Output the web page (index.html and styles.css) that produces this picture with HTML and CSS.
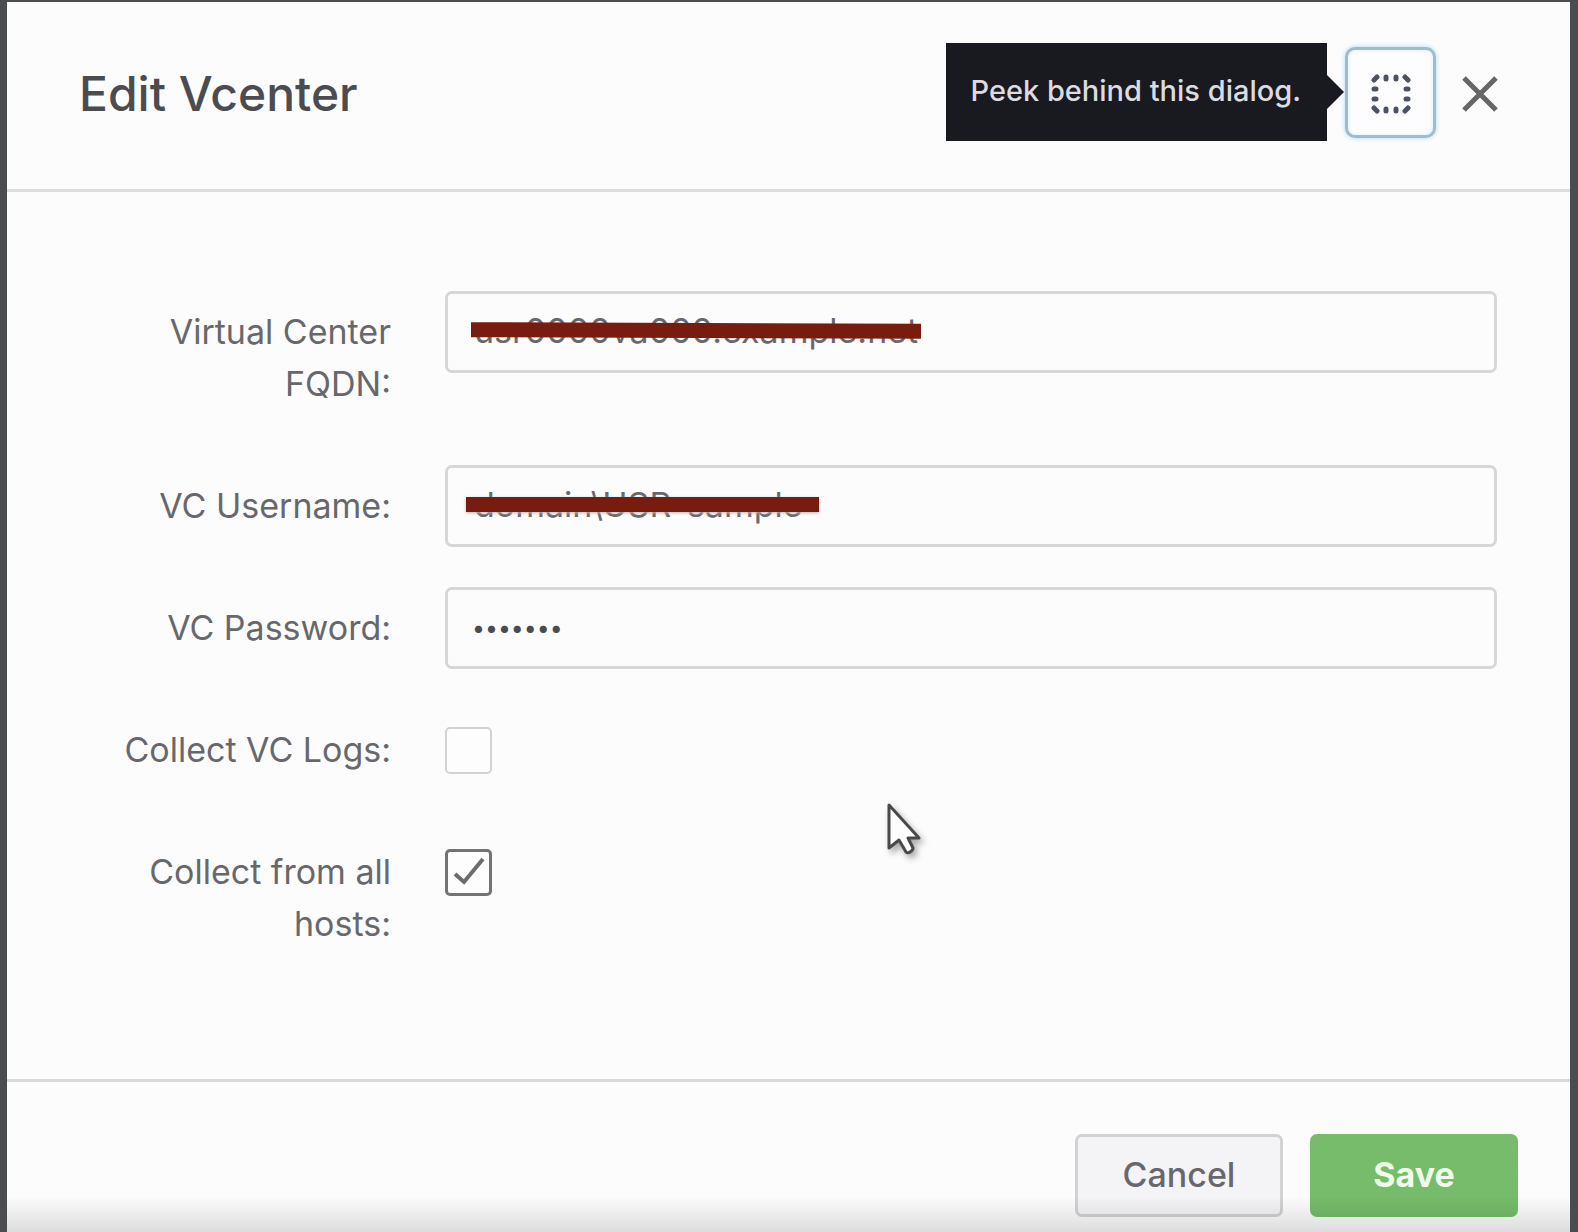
FILE: index.html
```html
<!DOCTYPE html>
<html lang="en">

<head>
    <meta charset="UTF-8">
    <meta name="viewport" content="width=device-width, initial-scale=1.0">
    <title>Edit Vcenter</title>
    <link rel="stylesheet" href="styles.css">
</head>

<body>
    <form class="dialog" role="dialog" aria-labelledby="dialog-title">
        <!-- Title, tooltip and window buttons -->
        <header class="dialog-header">
            <h1 id="dialog-title">Edit Vcenter</h1>
            <div class="dialog-tools">
                <div class="tooltip" role="tooltip" id="peek-tip">Peek behind this dialog.</div>
                <button class="peek" type="button" aria-label="Peek" aria-describedby="peek-tip">
                    <svg width="40" height="40" viewBox="0 0 40 40" fill="none" stroke="#4c5266" stroke-width="5" stroke-linecap="round">
                        <!-- dots along the sides -->
                        <path d="M15 3V5M25 3V5M15 35V37M25 35V37M3 15H5M3 25H5M35 15H37M35 25H37" />
                        <!-- corners -->
                        <path d="M3 6L6 3M34 3L37 6M3 34L6 37M34 37L37 34" />
                    </svg>
                </button>
                <button class="close" type="button" aria-label="Close">
                    <svg width="36" height="36" viewBox="0 0 36 36">
                        <path d="M2 2L34 34M34 2L2 34" fill="none" stroke="#656667" stroke-width="5" />
                    </svg>
                </button>
            </div>
        </header>

        <!-- Connection settings -->
        <div class="dialog-body">
            <div class="row">
                <label for="fqdn">Virtual Center FQDN:</label>
                <div class="field">
                    <!-- placeholder host name -->
                    <input class="text-input" type="text" id="fqdn" value="usr0000va000.example.net">
                    <span class="strike strike-fqdn"></span>
                </div>
            </div>
            <div class="row">
                <label for="username">VC Username:</label>
                <div class="field">
                    <!-- placeholder account -->
                    <input class="text-input" type="text" id="username" value="domain\USR-sample">
                    <span class="strike strike-username"></span>
                </div>
            </div>
            <div class="row">
                <label for="password">VC Password:</label>
                <div class="field">
                    <input class="text-input password" type="password" id="password" value="1234567">
                </div>
            </div>
            <div class="row">
                <label for="vc-logs">Collect VC Logs:</label>
                <div class="field check-field">
                    <input class="check" type="checkbox" id="vc-logs">
                </div>
            </div>
            <div class="row">
                <label for="all-hosts">Collect from all hosts:</label>
                <div class="field check-field">
                    <input class="check" type="checkbox" id="all-hosts" checked>
                    <svg class="tick" width="47" height="47" viewBox="0 0 47 47">
                        <path d="M10 25L19 33L38 10" fill="none" stroke="#6b6c6d" stroke-width="4" />
                    </svg>
                </div>
            </div>
        </div>

        <footer class="dialog-footer">
            <button class="btn" type="button">Cancel</button>
            <button class="btn btn-primary" type="submit">Save</button>
        </footer>
    </form>

    <div class="bottom-shade"></div>

    <!-- Mouse pointer -->
    <svg class="pointer" width="44" height="60" viewBox="0 0 44 60">
        <path d="M4 4V47L14 39L21 51C23 53 28 50 28 47L23 37H34Z" fill="#fdfdfd" stroke="#4a4a4c" stroke-width="3" stroke-linejoin="round" />
    </svg>
</body>

</html>
```
FILE: styles.css
```css
* {
    box-sizing: border-box;
}

body {
    margin: 0;
    padding: 2px 8px 0 7px;
    min-height: 100vh;
    display: flex;
    background-color: #4b4c50;
    font-family: Inter, Lato, sans-serif;
    color: #68686c;
}

button,
input {
    font-family: inherit;
    color: inherit;
}

.dialog {
    flex: 1;
    display: flex;
    flex-direction: column;
    background-color: #fcfcfd;
}

/* Header */
.dialog-header {
    display: flex;
    align-items: center;
    justify-content: space-between;
    padding: 41px 60px 48px 72px;
    border-bottom: 3px solid #dcdde0;
}

h1 {
    margin: 0;
    padding-top: 4px;
    font-size: 48px;
    line-height: 60px;
    font-weight: 500;
    color: #4c4c50;
}

.dialog-tools {
    display: flex;
    align-items: center;
}

.tooltip {
    position: relative;
    margin-right: 18px;
    padding: 23px 26px 25px 24px;
    background-color: #181a1f;
    color: #dcdce0;
    font-size: 29px;
    line-height: 50px;
    font-weight: 500;
}

.tooltip::after {
    content: "";
    position: absolute;
    top: 32px;
    left: 100%;
    border: 17px solid transparent;
    border-left-color: #181a1f;
    border-right: 0;
}

.peek,
.close {
    display: flex;
    align-items: center;
    justify-content: center;
    padding: 0;
    border: 0;
    background: none;
}

.peek {
    width: 91px;
    height: 91px;
    padding-top: 4px;
    border: 3px solid #a0bccb;
    border-radius: 10px;
    background-color: #fdfdff;
    box-shadow: 0 0 5px #a9d9ee, inset 0 0 5px #d6f1fb;
}

.close {
    width: 60px;
    height: 60px;
    padding-top: 4px;
    margin-left: 14px;
}

/* Form rows */
.dialog-body {
    flex: 1;
    display: flex;
    flex-direction: column;
    gap: 40px;
    padding: 99px 73px 40px 72px;
}

.row {
    display: grid;
    grid-template-columns: 312px 1fr;
    column-gap: 54px;
    align-items: start;
}

label {
    padding: 15px 0 15px 40px;
    font-size: 34px;
    line-height: 52px;
    text-align: right;
}

.field {
    position: relative;
    display: flex;
}

.text-input {
    width: 100%;
    height: 82px;
    padding: 0 26px 4px;
    border: 3px solid #d7d7da;
    border-radius: 7px;
    background-color: #fcfcfd;
    font-size: 34px;
}

.password {
    padding: 0 24px;
    font-size: 23px;
    color: #4c4c50;
}

/* Bars drawn over the private values */
.strike {
    position: absolute;
    height: 15px;
    background-color: #781c0f;
}

.strike-fqdn {
    top: 32px;
    left: 26px;
    width: 450px;
    transform: rotate(0.2deg);
}

.strike-username {
    top: 32px;
    left: 21px;
    width: 353px;
    box-shadow: 0 1px 3px #b9b9b9;
}

.check-field {
    height: 82px;
    align-items: center;
}

.check {
    appearance: none;
    width: 47px;
    height: 47px;
    margin: 0;
    border: 2px solid #d2d2d4;
    border-radius: 5px;
    background-color: #fdfdfd;
}

.check:checked {
    border: 3px solid #747476;
}

.tick {
    position: absolute;
    left: 0;
    pointer-events: none;
}

/* Footer */
.dialog-footer {
    display: flex;
    justify-content: flex-end;
    gap: 27px;
    padding: 52px 52px 15px;
    border-top: 3px solid #d9d9da;
}

.btn {
    width: 208px;
    height: 83px;
    padding: 0 0 2px;
    border: 3px solid #d2d2d4;
    border-radius: 7px;
    background-color: #f4f4f7;
    font-size: 34px;
    font-weight: 500;
}

.btn-primary {
    border-color: #76bc6a;
    background-color: #76bc6a;
    color: #f0fbe9;
    font-weight: 700;
}

.bottom-shade {
    position: fixed;
    left: 7px;
    right: 8px;
    bottom: 0;
    height: 36px;
    background: linear-gradient(rgba(0, 0, 0, 0), rgba(0, 0, 0, 0.12));
    pointer-events: none;
}

.pointer {
    position: absolute;
    left: 885px;
    top: 801px;
    filter: drop-shadow(3px 4px 3px #a8a8a8);
    pointer-events: none;
}
```
